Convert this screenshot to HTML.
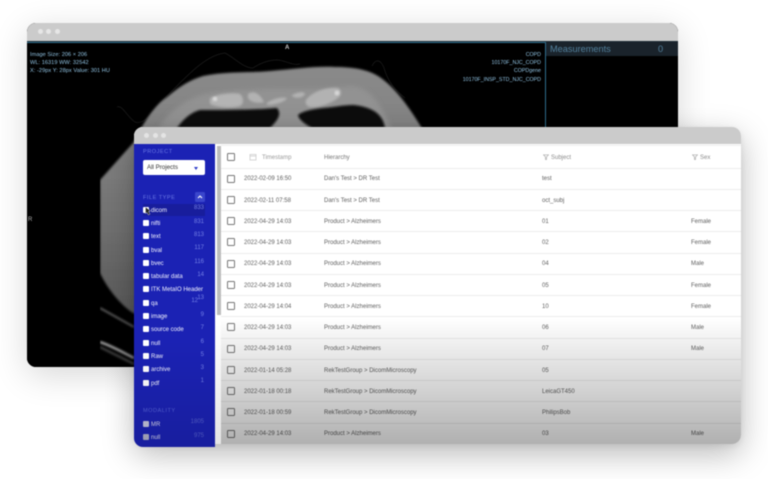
<!DOCTYPE html>
<html><head><meta charset="utf-8"><style>
html,body{margin:0;padding:0;background:#fff;width:768px;height:479px;overflow:hidden}
#r{position:absolute;left:0;top:0;width:768px;height:479px;overflow:hidden;filter:blur(.62px);font-family:"Liberation Sans",sans-serif}
#r div,#r span{position:absolute;white-space:nowrap}
.t{line-height:8px;height:8px}
.h{color:#90c2e2;font-size:5.6px;letter-spacing:.05px}
.hr{color:#90c2e2;font-size:5.3px}
.c{width:6px;height:6px;background:#fff;border-radius:1px;left:143px}
.l{left:151px;color:#f4f5ff;font-size:6px}
.n{color:#7480e6;font-size:6px;text-align:right;width:30px;left:174px}
.b{left:227px;width:8px;height:8px;box-sizing:border-box;border:1.2px solid #777;border-radius:1.2px;background:transparent}
.d,.p,.s,.x{font-size:6px;color:#606060}
.d{left:244px}.p{left:324px}.s{left:542px}.x{left:691px}
.ln{left:221px;width:520px;height:1px;background:#ececec}
</style></head><body><div id="r">

<!-- back window -->
<div style="left:27px;top:23px;width:651px;height:344px;border-radius:9px;box-shadow:0 8px 34px rgba(0,0,0,.16);background:#000"></div>
<div style="left:27px;top:23px;width:651px;height:344px;border-radius:9px;overflow:hidden;background:#000">
  <div style="left:0;top:0;width:651px;height:18px;background:#cbcbcb"></div>
  <div style="left:11px;top:6px;width:5px;height:5px;border-radius:50%;background:#e6e6e6"></div>
  <div style="left:19px;top:6px;width:5px;height:5px;border-radius:50%;background:#e6e6e6"></div>
  <div style="left:28px;top:6px;width:5px;height:5px;border-radius:50%;background:#e6e6e6"></div>
  <div style="left:0;top:18px;width:651px;height:1px;background:#1b2a33"></div>
  <div style="left:0;top:19px;width:518px;height:1px;background:#2f6f8f"></div>
  <div style="left:518px;top:19px;width:1px;height:325px;background:#2f6f8f"></div>
  <div style="left:519px;top:19px;width:132px;height:14px;background:#1a232b"></div>
</div>
<!-- CT scan -->
<svg style="position:absolute;left:0;top:0" width="768" height="479" viewBox="0 0 768 479">
  <defs>
    <clipPath id="cv"><rect x="100" y="43" width="445" height="324"/></clipPath>
    <linearGradient id="gs" x1="0" y1="0" x2="0" y2="1"><stop offset="0" stop-color="#8a8a8a"/><stop offset=".3" stop-color="#808080"/><stop offset=".55" stop-color="#707070"/><stop offset="1" stop-color="#4c4c4c"/></linearGradient>
    <filter id="bl"><feGaussianBlur stdDeviation="1"/></filter>
    <filter id="bl2"><feGaussianBlur stdDeviation="2"/></filter>
  </defs>
  <g clip-path="url(#cv)">
    <path d="M117 107C122 104 128 118 135 122C145 126 155 108 165 98C185 78 205 55 225 53C235 58 243 68 253 68C262 62 270 60 277 60C285 60 292 66 300 64M372 66C376 58 381 60 384 68C388 82 395 90 405 98" stroke="#1c1c1c" stroke-width=".7" fill="none"/>
    <path d="M100 180L133 143C145 120 155 105 167 97C180 86 190 80 203 76C225 71 250 73 270 71C295 69 315 66 335 67C355 67 370 70 381 78C395 88 408 105 423 130L460 260L300 360L133 313C122 306 108 290 100 273Z" fill="url(#gs)" filter="url(#bl)"/>
    <path d="M158 130C165 115 183 100 205 94C250 85 300 92 350 86C365 86 378 96 392 130Z" fill="#929292" filter="url(#bl2)"/>
    <path d="M210 98C218 94 232 92 240 94C244 98 244 104 240 106C230 109 216 107 210 104Z" fill="#b4b4b4" filter="url(#bl)"/>
    <path d="M248 94C254 90 260 94 264 102C258 104 250 102 248 98ZM267 103C274 98 282 97 287 98C285 102 275 105 267 105ZM292 95C298 92 304 91 305 94C303 98 296 99 292 96ZM306 100C312 92 325 87 338 88C342 90 342 95 338 98C330 104 318 108 310 107C306 106 305 103 306 100Z" fill="#b2b2b2" filter="url(#bl)"/>
    <circle cx="215" cy="99" r="2.200" fill="#dedede" filter="url(#bl)"/>
    <circle cx="337" cy="93" r="2.500" fill="#dadada" filter="url(#bl)"/>
    <path d="M177 128C184 118 192 112 200 110C225 110 255 110 277 108C281 113 280 118 270 128Z" fill="#0a0a0a" filter="url(#bl)"/>
    <path d="M298 115C302 112 307 110 323 108C335 107 345 105 353 105C365 106 374 110 378 114C382 118 384 122 385 128L312 128C305 124 299 120 298 115Z" fill="#0a0a0a" filter="url(#bl)"/>
    <path d="M100 308L134 327" stroke="#808080" stroke-width="1.400" filter="url(#bl)"/>
    <path d="M100 342C112 346 124 353 134 358" stroke="#c0c0c0" stroke-width="2" fill="none" filter="url(#bl)"/>
    <path d="M100 347L134 364" stroke="#4c4c4c" stroke-width="2" filter="url(#bl)"/>
  </g>
</svg>

<div class="t h" style="left:30px;top:51px">Image Size: 206 × 206</div>
<div class="t h" style="left:30px;top:59px">WL: 16319 WW: 32542</div>
<div class="t h" style="left:30px;top:67px">X: -29px Y: 28px Value: 301 HU</div>
<div class="t" style="left:285px;top:44px;color:#ccc;font-size:6px;font-weight:bold">A</div>
<div class="t" style="left:28px;top:216px;color:#aaa;font-size:6px">R</div>
<div class="t hr" style="right:227px;top:51px">COPD</div>
<div class="t hr" style="right:227px;top:59px">10170F_NJC_COPD</div>
<div class="t hr" style="right:227px;top:67px">COPDgene</div>
<div class="t hr" style="right:227px;top:76px">10170F_INSP_STD_NJC_COPD</div>
<div style="left:550px;top:43px;color:#52809c;font-size:9.200px;line-height:12px">Measurements</div>
<div style="left:658px;top:43px;color:#52809c;font-size:9.200px;line-height:12px">0</div>

<!-- front window -->
<div style="left:134px;top:127px;width:607px;height:317px;border-radius:9px;background:#fff;box-shadow:0 10px 32px rgba(0,0,0,.28),0 2px 8px rgba(0,0,0,.08)"></div>
<div style="left:134px;top:127px;width:607px;height:317px;border-radius:9px;overflow:hidden;background:#fff">
  <div style="left:0;top:0;width:607px;height:17px;background:#cbcbcb"></div>
  <div style="left:10px;top:6px;width:5px;height:5px;border-radius:50%;background:#e4e4e4"></div>
  <div style="left:19px;top:6px;width:5px;height:5px;border-radius:50%;background:#e4e4e4"></div>
  <div style="left:27px;top:6px;width:5px;height:5px;border-radius:50%;background:#e4e4e4"></div>
  <div style="left:83px;top:19px;width:3.500px;height:169px;background:#bbb"></div>
  <div style="left:87px;top:18px;width:520px;height:1px;background:#eee"></div>
</div>
<div style="left:134px;top:144px;width:81px;height:303px;background:#1b22b4;border-radius:0 0 0 9px"></div>

<!-- sidebar -->
<div class="t" style="left:143px;top:148px;color:#6a78e4;font-size:5.600px;letter-spacing:.5px">PROJECT</div>
<div style="left:143px;top:160px;width:62px;height:15px;background:#fff;border-radius:2px"></div>
<div class="t" style="left:147px;top:164px;color:#333;font-size:6.200px">All Projects</div>
<div style="left:193.500px;top:166.500px;width:0;height:0;border-left:2.500px solid transparent;border-right:2.500px solid transparent;border-top:3px solid #2b3bc8"></div>
<div class="t" style="left:143px;top:194px;color:#6a78e4;font-size:5.600px;letter-spacing:.5px">FILE TYPE</div>
<div style="left:195px;top:192px;width:10px;height:10px;background:#3a46cc;border-radius:1.500px"></div>
<svg style="position:absolute;left:197px;top:194px" width="6" height="6" viewBox="0 0 6 6"><path d="M1 4L3 2L5 4" stroke="#fff" stroke-width="1.100" fill="none"/></svg>
<div style="left:143px;top:204px;width:62px;height:12px;background:#181d9c"></div>

<div class="c" style="top:207px"></div><div class="t l" style="top:206.500px">dicom</div><div class="t n" style="top:204px">833</div>
<div class="c" style="top:220px"></div><div class="t l" style="top:219.500px">nifti</div><div class="t n" style="top:217.500px">831</div>
<div class="c" style="top:233px"></div><div class="t l" style="top:233px">text</div><div class="t n" style="top:230.500px">813</div>
<div class="c" style="top:246.500px"></div><div class="t l" style="top:246.500px">bval</div><div class="t n" style="top:244px">117</div>
<div class="c" style="top:259.500px"></div><div class="t l" style="top:259.500px">bvec</div><div class="t n" style="top:257.500px">116</div>
<div class="c" style="top:273px"></div><div class="t l" style="top:273px">tabular data</div><div class="t n" style="top:270.500px">14</div>
<div class="c" style="top:286px"></div><div class="t l" style="top:286px">ITK MetaIO Header</div>
<div class="c" style="top:299.500px"></div><div class="t l" style="top:299.500px">qa</div><div class="t n" style="top:297px;left:168px">12</div><div class="t n" style="top:294px">13</div>
<div class="c" style="top:313px"></div><div class="t l" style="top:313px">image</div><div class="t n" style="top:311px">9</div>
<div class="c" style="top:326px"></div><div class="t l" style="top:326px">source code</div><div class="t n" style="top:324px">7</div>
<div class="c" style="top:339.500px"></div><div class="t l" style="top:339.500px">null</div><div class="t n" style="top:337.500px">6</div>
<div class="c" style="top:353px"></div><div class="t l" style="top:353px">Raw</div><div class="t n" style="top:351px">5</div>
<div class="c" style="top:366px"></div><div class="t l" style="top:366px">archive</div><div class="t n" style="top:364px">3</div>
<div class="c" style="top:379.500px"></div><div class="t l" style="top:379.500px">pdf</div><div class="t n" style="top:377px">1</div>
<div class="t" style="left:143px;top:407px;color:#5561d8;font-size:5.600px;letter-spacing:.5px">MODALITY</div>
<div class="c" style="top:421px;background:#c4c5dc"></div><div class="t l" style="top:420.500px;color:#dde">MR</div><div class="t n" style="top:418px;color:#5661cf">1805</div>
<div class="c" style="top:434px;background:#b0b1c8"></div><div class="t l" style="top:434px;color:#dde">null</div><div class="t n" style="top:431.500px;color:#5661cf">975</div>
<!-- cursor -->
<svg style="position:absolute;left:144px;top:206px" width="8" height="10" viewBox="0 0 8 10"><path d="M1.500 1L1.500 7.500L3 6.500L4.500 9L6 8L4.500 5.500L6.500 5Z" fill="#222" stroke="#fff" stroke-width=".4"/></svg>

<!-- table -->
<div class="b" style="top:153px"></div>
<svg style="position:absolute;left:249px;top:153px" width="8" height="8" viewBox="0 0 8 8"><rect x="1" y="1.500" width="6" height="5.500" fill="none" stroke="#ccc" stroke-width=".8"/><path d="M1 3H7" stroke="#ccc" stroke-width=".8"/></svg>
<div class="t d" style="left:262px;top:154px;color:#9a9a9a">Timestamp</div>
<div class="t p" style="top:154px;color:#777">Hierarchy</div>
<svg style="position:absolute;left:543px;top:154px" width="6" height="6" viewBox="0 0 6 6"><path d="M.5 .8H5.500L3.500 3V5.500H2.500V3Z" fill="none" stroke="#aaa" stroke-width=".7"/></svg>
<div class="t s" style="left:551px;top:154px;color:#8a8a8a">Subject</div>
<svg style="position:absolute;left:692px;top:154px" width="6" height="6" viewBox="0 0 6 6"><path d="M.5 .8H5.500L3.500 3V5.500H2.500V3Z" fill="none" stroke="#aaa" stroke-width=".7"/></svg>
<div class="t x" style="left:700px;top:154px;color:#8a8a8a">Sex</div>

<div class="ln" style="top:168px"></div><div class="ln" style="top:189px"></div><div class="ln" style="top:210px"></div><div class="ln" style="top:231px"></div><div class="ln" style="top:253px"></div><div class="ln" style="top:274px"></div><div class="ln" style="top:295px"></div><div class="ln" style="top:316px"></div><div class="ln" style="top:338px"></div><div class="ln" style="top:359px"></div><div class="ln" style="top:380px"></div><div class="ln" style="top:401px"></div><div class="ln" style="top:423px"></div>

<div class="b" style="top:175px"></div><div class="t d" style="top:175px">2022-02-09 16:50</div><div class="t p" style="top:175px">Dan's Test &gt; DR Test</div><div class="t s" style="top:175px">test</div>
<div class="b" style="top:196px"></div><div class="t d" style="top:197px">2022-02-11 07:58</div><div class="t p" style="top:197px">Dan's Test &gt; DR Test</div><div class="t s" style="top:197px">oct_subj</div>
<div class="b" style="top:217px"></div><div class="t d" style="top:218px">2022-04-29 14:03</div><div class="t p" style="top:218px">Product &gt; Alzheimers</div><div class="t s" style="top:218px">01</div><div class="t x" style="top:218px">Female</div>
<div class="b" style="top:238px"></div><div class="t d" style="top:239px">2022-04-29 14:03</div><div class="t p" style="top:239px">Product &gt; Alzheimers</div><div class="t s" style="top:239px">02</div><div class="t x" style="top:239px">Female</div>
<div class="b" style="top:260px"></div><div class="t d" style="top:260px">2022-04-29 14:03</div><div class="t p" style="top:260px">Product &gt; Alzheimers</div><div class="t s" style="top:260px">04</div><div class="t x" style="top:260px">Male</div>
<div class="b" style="top:281px"></div><div class="t d" style="top:282px">2022-04-29 14:03</div><div class="t p" style="top:282px">Product &gt; Alzheimers</div><div class="t s" style="top:282px">05</div><div class="t x" style="top:282px">Female</div>
<div class="b" style="top:302px"></div><div class="t d" style="top:303px">2022-04-29 14:04</div><div class="t p" style="top:303px">Product &gt; Alzheimers</div><div class="t s" style="top:303px">10</div><div class="t x" style="top:303px">Female</div>
<div class="b" style="top:323px"></div><div class="t d" style="top:324px">2022-04-29 14:03</div><div class="t p" style="top:324px">Product &gt; Alzheimers</div><div class="t s" style="top:324px">06</div><div class="t x" style="top:324px">Male</div>
<div class="b" style="top:345px"></div><div class="t d" style="top:345px">2022-04-29 14:03</div><div class="t p" style="top:345px">Product &gt; Alzheimers</div><div class="t s" style="top:345px">07</div><div class="t x" style="top:345px">Male</div>
<div class="b" style="top:366px"></div><div class="t d" style="top:367px">2022-01-14 05:28</div><div class="t p" style="top:367px">RekTestGroup &gt; DicomMicroscopy</div><div class="t s" style="top:367px">05</div>
<div class="b" style="top:387px"></div><div class="t d" style="top:388px">2022-01-18 00:18</div><div class="t p" style="top:388px">RekTestGroup &gt; DicomMicroscopy</div><div class="t s" style="top:388px">LeicaGT450</div>
<div class="b" style="top:408px"></div><div class="t d" style="top:409px">2022-01-18 00:59</div><div class="t p" style="top:409px">RekTestGroup &gt; DicomMicroscopy</div><div class="t s" style="top:409px">PhilipsBob</div>
<div class="b" style="top:430px"></div><div class="t d" style="top:430px">2022-04-29 14:03</div><div class="t p" style="top:430px">Product &gt; Alzheimers</div><div class="t s" style="top:430px">03</div><div class="t x" style="top:430px">Male</div>

<!-- bottom fade -->
<div style="left:221px;top:318px;width:520px;height:126px;border-radius:0 0 9px 0;background:linear-gradient(rgba(0,0,0,0),rgba(0,0,0,.31))"></div>
<div style="left:215px;top:318px;width:6px;height:126px;background:linear-gradient(rgba(0,0,0,0),rgba(0,0,0,.1))"></div>
<div style="left:134px;top:340px;width:81px;height:107px;border-radius:0 0 0 9px;background:linear-gradient(rgba(0,0,0,0),rgba(0,0,0,.12))"></div>
</div></body></html>
